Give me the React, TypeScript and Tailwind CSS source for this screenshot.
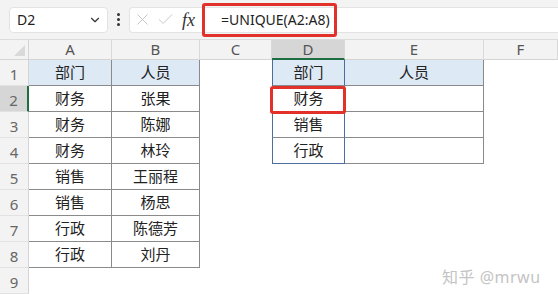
import React from 'react';
import { ChevronDown, X, Check } from 'lucide-react';

const font = { fontFamily: '"Noto Sans", "Noto Sans CJK SC", sans-serif' };

const cols = ['A', 'B', 'C', 'D', 'E', 'F'];

const left = [
  ['部门', '人员'],
  ['财务', '张果'],
  ['财务', '陈娜'],
  ['财务', '林玲'],
  ['销售', '王丽程'],
  ['销售', '杨思'],
  ['行政', '陈德芳'],
  ['行政', '刘丹'],
];

const right = ['部门', '财务', '销售', '行政'];

function Row({ n }: { n: number }) {
  const i = n - 1;
  const inLeft = i < 8;
  const inRight = i < 4;
  const head = i === 0;
  const sel = n === 2;

  return (
    <>
      <div
        className={`flex items-end justify-center text-[15px] text-[#666] ${
          sel ? 'bg-[#d6d6d6] border-r-2 border-r-[#1e6e42]' : 'bg-[#f3f3f3] border-r border-r-[#d4d4d4]'
        } border-b border-b-[#e2e2e2]`}
      >
        {n}
      </div>
      {/* A */}
      <div
        className={`flex items-center justify-center text-[15px] text-[#222] ${
          inLeft ? `border-b border-r border-[#8a8a8a] ${head ? 'bg-[#dde9f5]' : 'bg-white'}` : 'bg-white'
        }`}
      >
        {inLeft ? left[i][0] : ''}
      </div>
      {/* B */}
      <div
        className={`flex items-center justify-center text-[15px] text-[#222] ${
          inLeft ? `border-b border-r border-[#8a8a8a] ${head ? 'bg-[#dde9f5]' : 'bg-white'}` : 'bg-white'
        }`}
      >
        {inLeft ? left[i][1] : ''}
      </div>
      {/* C */}
      <div className="bg-white" />
      {/* D */}
      <div
        className={`flex items-center justify-center text-[15px] text-[#222] ${
          inRight
            ? `border-l border-r border-l-[#4d6d9e] border-r-[#4d6d9e] border-b ${
                i === 3 ? 'border-b-[#4d6d9e]' : 'border-b-[#8a8a8a]'
              } ${head ? 'bg-[#dde9f5]' : 'bg-white'}`
            : 'bg-white'
        }`}
      >
        {inRight ? right[i] : ''}
      </div>
      {/* E */}
      <div
        className={`flex items-center justify-center text-[15px] text-[#222] ${
          inRight ? `border-b border-r border-[#8a8a8a] ${head ? 'bg-[#dde9f5]' : 'bg-white'}` : 'bg-white'
        }`}
      >
        {inRight && head ? '人员' : ''}
      </div>
      {/* F */}
      <div className="bg-white" />
    </>
  );
}

export default function App() {
  return (
    <div className="relative w-[558px] h-[294px] overflow-hidden bg-white" style={font}>
      {/* formula bar */}
      <div className="h-[40px] bg-[#f3f3f3] border-b border-[#dcdcdc] flex items-center pl-[9px] gap-[6px]">
        <div className="w-[99px] h-[26px] bg-white rounded-[4px] border border-[#e3e3e3] flex items-center justify-between pl-[7px] pr-[5px] text-[14px] text-[#222]">
          <span>D2</span>
          <ChevronDown size={14} strokeWidth={2} className="text-[#333]" />
        </div>
        <div className="w-[8px] flex flex-col items-center gap-[2px] mr-[1px]">
          <span className="w-[3px] h-[3px] bg-[#333] rounded-full" />
          <span className="w-[3px] h-[3px] bg-[#333] rounded-full" />
          <span className="w-[3px] h-[3px] bg-[#333] rounded-full" />
        </div>
        <div className="flex-1 h-[26px] bg-white rounded-l-[4px] border border-[#e3e3e3] border-r-0 flex items-center">
          <div className="w-[72px] flex items-center pl-[3px] gap-[4px] shrink-0">
            <X size={19} strokeWidth={1.2} className="text-[#c4c4c4]" />
            <Check size={19} strokeWidth={1.2} className="text-[#c4c4c4]" />
            <span
              className="text-[18px] italic text-[#333] ml-[3px] leading-none"
              style={{ fontFamily: '"Liberation Serif", serif' }}
            >
              fx
            </span>
          </div>
          <span className="pl-[19px] text-[14px] text-[#222]">=UNIQUE(A2:A8)</span>
        </div>
      </div>

      {/* sheet */}
      <div className="grid grid-cols-[29px_83px_88px_72px_73px_139px_1fr] grid-rows-[20px_repeat(9,26px)]">
        <div className="bg-[#f3f3f3] border-r border-b border-[#d4d4d4] relative">
          <div className="absolute right-[3px] bottom-[3px] w-0 h-0 border-l-[11px] border-l-transparent border-b-[11px] border-b-[#d9d9d9]" />
        </div>
        {cols.map((c) => (
          <div
            key={c}
            className={`flex items-center justify-center text-[15px] text-[#555] border-r border-[#d9d9d9] ${
              c === 'D' ? 'bg-[#d6d6d6] border-b-2 border-b-[#1e6e42]' : 'bg-[#f3f3f3] border-b border-b-[#d4d4d4]'
            }`}
          >
            {c}
          </div>
        ))}
        {[1, 2, 3, 4, 5, 6, 7, 8, 9].map((n) => (
          <Row key={n} n={n} />
        ))}
      </div>

      {/* annotations */}
      <div className="absolute left-[202px] top-[3px] w-[135px] h-[34px] border-[3px] border-[#e2312a] rounded-[3px]" />
      <div className="absolute left-[270px] top-[86px] w-[76px] h-[28px] border-[3px] border-[#e2312a] rounded-[3px]" />

      <div className="absolute left-[442px] top-[265px] text-[16px] text-[#c4c4c4] tracking-[0.5px]">
        知乎 @mrwu
      </div>
    </div>
  );
}
